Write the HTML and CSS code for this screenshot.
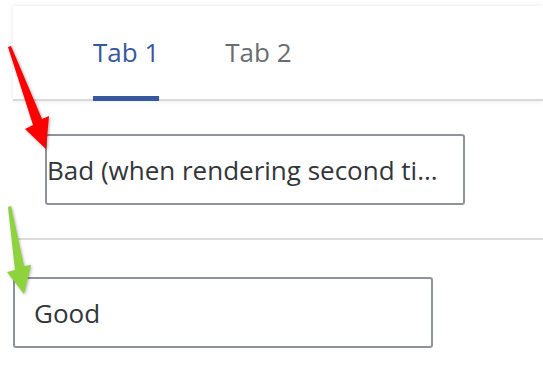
FILE: index.html
```html
<!DOCTYPE html>
<html>
<head>
<meta charset="utf-8">
<link rel="stylesheet" href="styles.css">
</head>
<body>
<div class="page">
  <div class="tabbar">
    <div class="tab active">Tab 1</div>
    <div class="tab">Tab 2</div>
  </div>
  <div class="field bad">Bad (when rendering second ti...</div>
  <div class="divider"></div>
  <div class="field good">Good</div>
</div>
<svg class="annotations" width="543" height="391" viewBox="0 0 543 391">
  <polygon class="arrow-red" points="8,47 11,46 42,119 49,116 46,149 25,129 33,125"/>
  <polygon class="arrow-green" points="8,207 11,206 24,266 31,265 24,294 7,272 15,270"/>
</svg>
</body>
</html>
```
FILE: styles.css
```css
html, body {
  margin: 0;
  padding: 0;
  background: #ffffff;
  font-family: "Open Sans", "Liberation Sans", sans-serif;
}
.page {
  padding-left: 13px;
  padding-top: 6px;
}
.tabbar {
  height: 95px;
  box-sizing: border-box;
  display: flex;
  gap: 66px;
  padding-left: 80px;
  background: #ffffff;
  box-shadow: 0 0 5px rgba(0, 0, 0, 0.10), inset 0 -2px 0 #d9d9d9;
}
.tab {
  height: 100%;
  box-sizing: border-box;
  padding-top: 29px;
  border-bottom: 5px solid transparent;
  font-size: 26px;
  line-height: 35px;
  color: #6a6d70;
}
.tab.active {
  color: #36589e;
  border-bottom-color: #36589e;
}
.field {
  width: 420px;
  height: 71px;
  box-sizing: border-box;
  border: 2px solid #8f949c;
  border-radius: 3px;
  display: flex;
  align-items: center;
  font-size: 26px;
  color: #32363a;
  white-space: nowrap;
}
.bad {
  margin-top: 33px;
  margin-left: 32px;
  padding-left: 0;
}
.divider {
  margin-top: 33px;
  height: 2px;
  background: #dcdcdc;
}
.good {
  margin-top: 37px;
  padding-left: 19px;
}
.annotations {
  position: absolute;
  left: 0;
  top: 0;
  pointer-events: none;
}
.arrow-red {
  fill: #ff0000;
  filter: drop-shadow(1px 1px 1.5px rgba(0, 0, 0, 0.35));
}
.arrow-green {
  fill: #8ed23c;
  filter: drop-shadow(1px 1px 1.5px rgba(0, 0, 0, 0.3));
}
```
